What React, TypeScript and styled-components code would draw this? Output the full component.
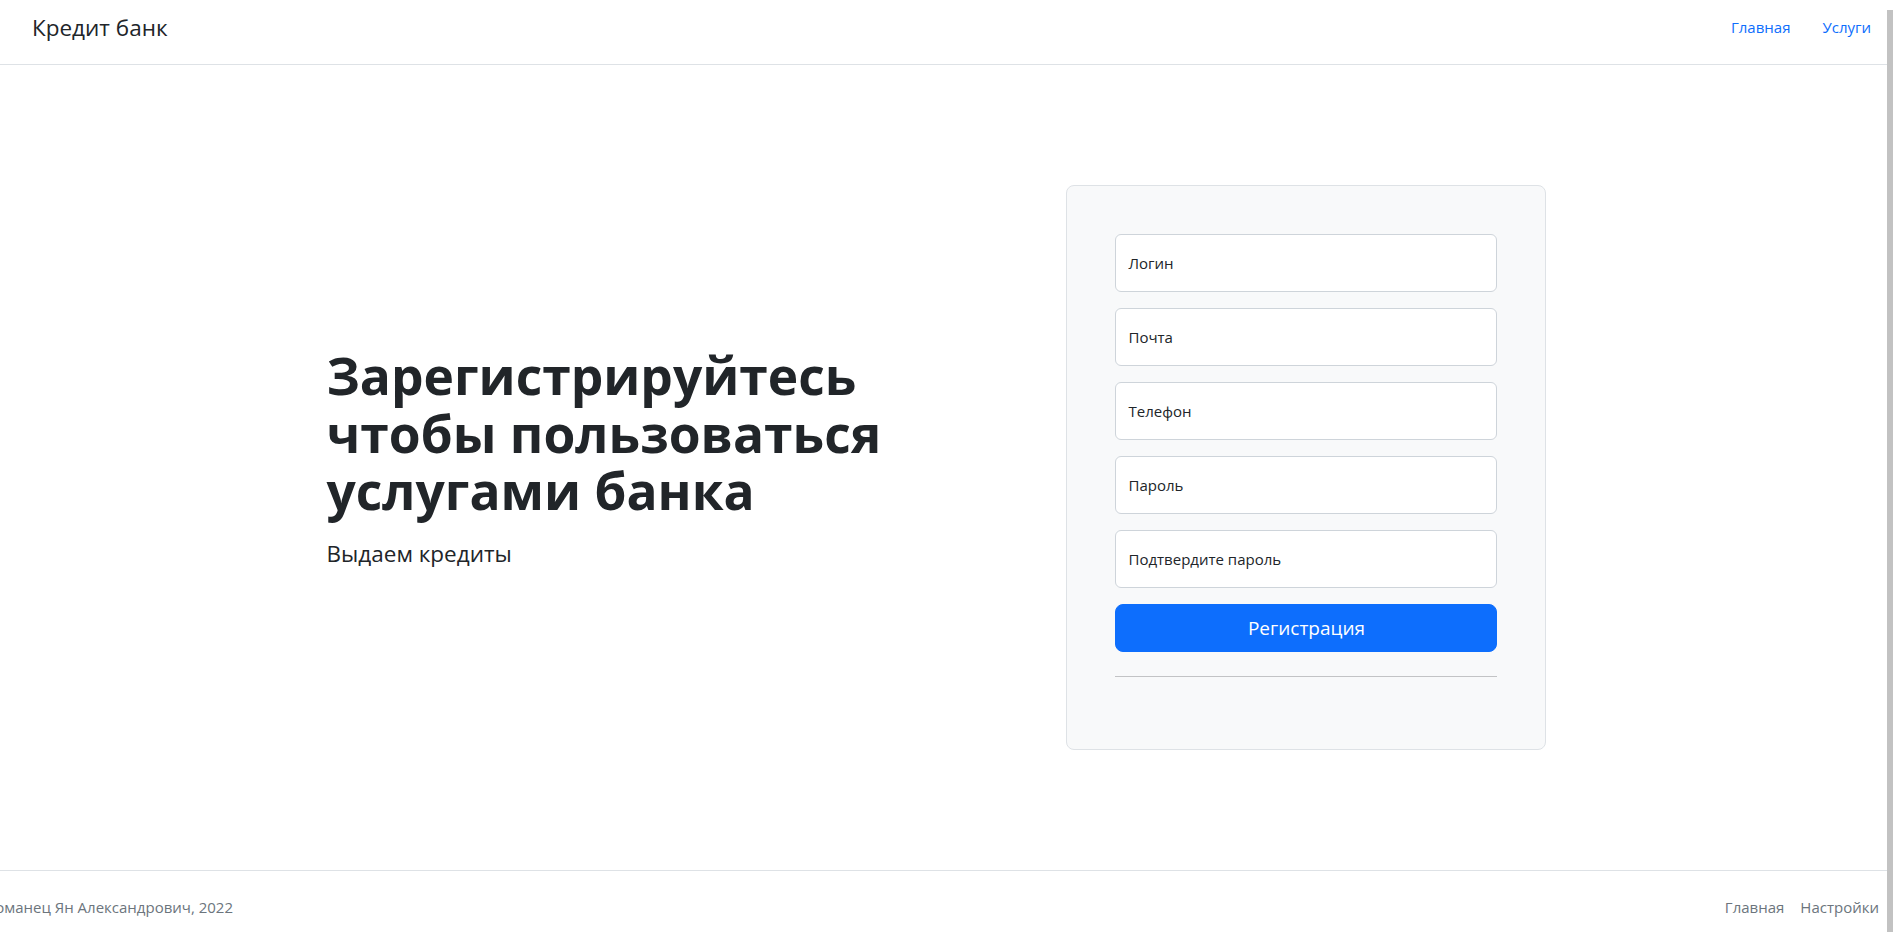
import styled, { createGlobalStyle } from 'styled-components';
import { FC } from 'react';

const fields = ['Логин', 'Почта', 'Телефон', 'Пароль', 'Подтвердите пароль'];

const App: FC = () => (
    <>
        <GlobalStyle />
        <Header>
            <Brand href='#'>Кредит банк</Brand>
            <TopNav>
                <TopLink href='#'>Главная</TopLink>
                <TopLink href='#'>Услуги</TopLink>
            </TopNav>
        </Header>
        <Main>
            <Row>
                <Intro>
                    <Title>
                        Зарегистрируйтесь
                        <br />
                        чтобы пользоваться
                        <br />
                        услугами банка
                    </Title>
                    <Lead>Выдаем кредиты</Lead>
                </Intro>
                <SignUpForm onSubmit={(e) => e.preventDefault()}>
                    {fields.map((label) => (
                        <Field key={label} placeholder={label} aria-label={label} />
                    ))}
                    <SubmitButton type='submit'>Регистрация</SubmitButton>
                    <Divider />
                </SignUpForm>
            </Row>
        </Main>
        <Footer>
            <Copyright>
                <span>© Романец Ян Александрович, 2022</span>
            </Copyright>
            <BottomNav>
                <BottomLink href='#'>Главная</BottomLink>
                <BottomLink href='#'>Настройки</BottomLink>
            </BottomNav>
        </Footer>
        <ScrollTrack>
            <ScrollThumb />
        </ScrollTrack>
    </>
);

const GlobalStyle = createGlobalStyle`
    * {
        box-sizing: border-box;
    }

    body {
        margin: 0;
        padding-right: 6px;
        background: #ffffff;
        color: #212529;
        font-family: 'Segoe UI', 'Open Sans', 'Noto Sans', sans-serif;
        font-size: 15px;
        line-height: 1.5;
    }
`;

const Header = styled.header({
    display: 'flex',
    justifyContent: 'space-between',
    alignItems: 'flex-start',
    height: '65px',
    padding: '10px 0 0 32px',
    marginBottom: '24px',
    borderBottom: '1px solid #dee2e6',
});

const Brand = styled.a({
    fontSize: '22.5px',
    lineHeight: '36px',
    color: '#212529',
    textDecoration: 'none',
});

const TopNav = styled.nav({
    display: 'flex',
});

const TopLink = styled.a({
    padding: '5px 16px',
    fontSize: '15px',
    lineHeight: '24px',
    color: '#0d6efd',
    textDecoration: 'none',
});

const Main = styled.main({
    padding: '96px 0',
});

const Row = styled.div({
    width: '66.666667%',
    margin: '0 auto',
    padding: '0 26px 0 12px',
    display: 'grid',
    gridTemplateColumns: '1fr 480px',
    alignItems: 'center',
});

const Intro = styled.div({
    display: 'flex',
    flexDirection: 'column',
});

const Title = styled.h1({
    margin: '0 0 16px',
    fontSize: '51.5px',
    fontWeight: 700,
    lineHeight: '57.6px',
});

const Lead = styled.p({
    margin: '0 0 16px',
    fontSize: '22.5px',
    fontWeight: 400,
    lineHeight: '36px',
});

const SignUpForm = styled.form({
    padding: '48px',
    background: '#f8f9fa',
    border: '1px solid #dee2e6',
    borderRadius: '8px',
});

const Field = styled.input({
    display: 'block',
    width: '100%',
    height: '58px',
    margin: '0 0 16px',
    padding: '16px 12px',
    fontFamily: 'inherit',
    fontSize: '15px',
    lineHeight: '24px',
    color: '#212529',
    background: '#ffffff',
    border: '1px solid #ced4da',
    borderRadius: '6px',
    outline: 'none',

    '&::placeholder': {
        color: '#212529',
        opacity: 1,
    },
});

const SubmitButton = styled.button({
    display: 'block',
    width: '100%',
    height: '48px',
    padding: '8px 16px',
    fontFamily: 'inherit',
    fontSize: '19px',
    lineHeight: '30px',
    color: '#ffffff',
    background: '#0d6efd',
    border: '1px solid #0d6efd',
    borderRadius: '8px',
    cursor: 'pointer',
});

const Divider = styled.hr({
    margin: '24px 0',
    border: 0,
    borderTop: '1px solid #212529',
    opacity: 0.25,
});

const Footer = styled.footer({
    display: 'flex',
    justifyContent: 'space-between',
    alignItems: 'center',
    margin: '24px 0',
    padding: '16px 0',
    borderTop: '1px solid #dee2e6',
});

const Copyright = styled.div({
    width: '233px',
    display: 'flex',
    justifyContent: 'flex-end',
    whiteSpace: 'nowrap',
    color: '#6c757d',
});

const BottomNav = styled.nav({
    display: 'flex',
});

const BottomLink = styled.a({
    padding: '8px',
    lineHeight: '24px',
    color: '#6c757d',
    textDecoration: 'none',
});

// window scrollbar as it appears in the screenshot
const ScrollTrack = styled.div({
    position: 'fixed',
    top: 0,
    right: 0,
    bottom: 0,
    width: '6px',
    padding: '10px 0 0',
    background: '#ffffff',
});

const ScrollThumb = styled.div({
    height: '100%',
    background: '#c2c2c2',
});

export default App;
